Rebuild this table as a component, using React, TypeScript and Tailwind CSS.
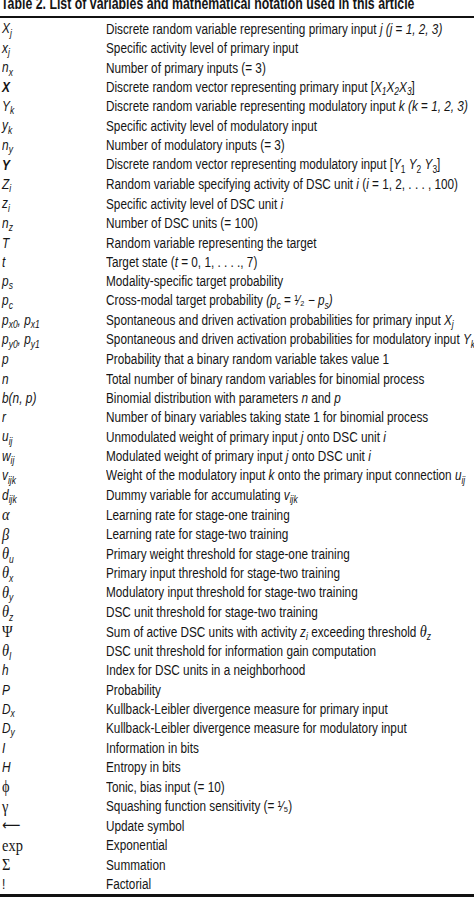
import React from "react";

const S = ({ children }: { children: React.ReactNode }) => (
  <sub className="text-[10px] align-[-1px] leading-none">{children}</sub>
);
const I = ({ children }: { children: React.ReactNode }) => <i className="italic">{children}</i>;
const G = ({ children }: { children: React.ReactNode }) => (
  <span className="not-italic text-[17px] leading-none" style={{ fontFamily: '"Liberation Serif", serif' }}>{children}</span>
);

type Row = [React.ReactNode, React.ReactNode];

const rows: Row[] = [
  [<I>X<S>j</S></I>, <>Discrete random variable representing primary input <I>j (j</I> = <I>1, 2, 3)</I></>],
  [<I>x<S>j</S></I>, <>Specific activity level of primary input</>],
  [<I>n<S>x</S></I>, <>Number of primary inputs (= 3)</>],
  [<b className="italic">X</b>, <>Discrete random vector representing primary input [<I>X<S>1</S>X<S>2</S>X<S>3</S></I>]</>],
  [<I>Y<S>k</S></I>, <>Discrete random variable representing modulatory input <I>k (k</I> = <I>1, 2, 3)</I></>],
  [<I>y<S>k</S></I>, <>Specific activity level of modulatory input</>],
  [<I>n<S>y</S></I>, <>Number of modulatory inputs (= 3)</>],
  [<b className="italic">Y</b>, <>Discrete random vector representing modulatory input [<I>Y</I><S>1</S> <I>Y</I><S>2</S> <I>Y</I><S>3</S>]</>],
  [<I>Z<S>i</S></I>, <>Random variable specifying activity of DSC unit <I>i</I> (<I>i</I> = 1, 2, . . . , 100)</>],
  [<I>z<S>i</S></I>, <>Specific activity level of DSC unit <I>i</I></>],
  [<I>n<S>z</S></I>, <>Number of DSC units (= 100)</>],
  [<I>T</I>, <>Random variable representing the target</>],
  [<I>t</I>, <>Target state (<I>t</I> = 0, 1, . . . ., 7)</>],
  [<I>p<S>s</S></I>, <>Modality-specific target probability</>],
  [<I>p<S>c</S></I>, <>Cross-modal target probability <I>(p<S>c</S></I> = ¹⁄₂ − <I>p<S>s</S>)</I></>],
  [<I>p<S>x0</S>, p<S>x1</S></I>, <>Spontaneous and driven activation probabilities for primary input <I>X<S>j</S></I></>],
  [<I>p<S>y0</S>, p<S>y1</S></I>, <>Spontaneous and driven activation probabilities for modulatory input <I>Y<S>k</S></I></>],
  [<I>p</I>, <>Probability that a binary random variable takes value 1</>],
  [<I>n</I>, <>Total number of binary random variables for binomial process</>],
  [<I>b(n, p)</I>, <>Binomial distribution with parameters <I>n</I> and <I>p</I></>],
  [<I>r</I>, <>Number of binary variables taking state 1 for binomial process</>],
  [<I>u<S>ij</S></I>, <>Unmodulated weight of primary input <I>j</I> onto DSC unit <I>i</I></>],
  [<I>w<S>ij</S></I>, <>Modulated weight of primary input <I>j</I> onto DSC unit <I>i</I></>],
  [<I>v<S>ijk</S></I>, <>Weight of the modulatory input <I>k</I> onto the primary input connection <I>u<S>ij</S></I></>],
  [<I>d<S>ijk</S></I>, <>Dummy variable for accumulating <I>v<S>ijk</S></I></>],
  [<G><I>α</I></G>, <>Learning rate for stage-one training</>],
  [<G><I>β</I></G>, <>Learning rate for stage-two training</>],
  [<><G><I>θ</I></G><I><S>u</S></I></>, <>Primary weight threshold for stage-one training</>],
  [<><G><I>θ</I></G><I><S>x</S></I></>, <>Primary input threshold for stage-two training</>],
  [<><G><I>θ</I></G><I><S>y</S></I></>, <>Modulatory input threshold for stage-two training</>],
  [<><G><I>θ</I></G><I><S>z</S></I></>, <>DSC unit threshold for stage-two training</>],
  [<G>Ψ</G>, <>Sum of active DSC units with activity <I>z<S>i</S></I> exceeding threshold <G><I>θ</I></G><I><S>z</S></I></>],
  [<><G><I>θ</I></G><I><S>I</S></I></>, <>DSC unit threshold for information gain computation</>],
  [<I>h</I>, <>Index for DSC units in a neighborhood</>],
  [<I>P</I>, <>Probability</>],
  [<I>D<S>x</S></I>, <>Kullback-Leibler divergence measure for primary input</>],
  [<I>D<S>y</S></I>, <>Kullback-Leibler divergence measure for modulatory input</>],
  [<I>I</I>, <>Information in bits</>],
  [<I>H</I>, <>Entropy in bits</>],
  [<G>ϕ</G>, <>Tonic, bias input (= 10)</>],
  [<G>γ</G>, <>Squashing function sensitivity (= ¹⁄₅)</>],
  [
    <span className="text-[15px] leading-none" style={{ fontFamily: '"DejaVu Sans", sans-serif' }}>⟵</span>,
    <>Update symbol</>,
  ],
  [<G>exp</G>, <>Exponential</>],
  [<G>Σ</G>, <>Summation</>],
  [<>!</>, <>Factorial</>],
];

export default function App() {
  return (
    <div
      className="w-[474px] h-[897px] overflow-hidden bg-white text-[#151515]"
      style={{ fontFamily: '"Liberation Sans", Arial, sans-serif' }}
    >
      <div className="-mt-[5px] h-[21px] pl-[1px] text-[17px] leading-[17px] font-bold whitespace-nowrap">
        <span className="inline-block origin-left scale-x-[0.725]">
          Table 2. List of variables and mathematical notation used in this article
        </span>
      </div>
      <div className="h-[2px] bg-[#111]" />
      <div className="flex flex-col pt-[1px]">
        {rows.map(([sym, desc], i) => (
          <div key={i} className="flex items-center h-[19.45px] text-[14px] leading-none whitespace-nowrap">
            <div className="w-[106px] shrink-0 pl-[2px]">
              <span className="inline-block origin-left scale-x-[0.85]">{sym}</span>
            </div>
            <div className="inline-block origin-left scale-x-[0.84]">{desc}</div>
          </div>
        ))}
      </div>
      <div className="h-[4px] bg-[#111]" />
    </div>
  );
}
